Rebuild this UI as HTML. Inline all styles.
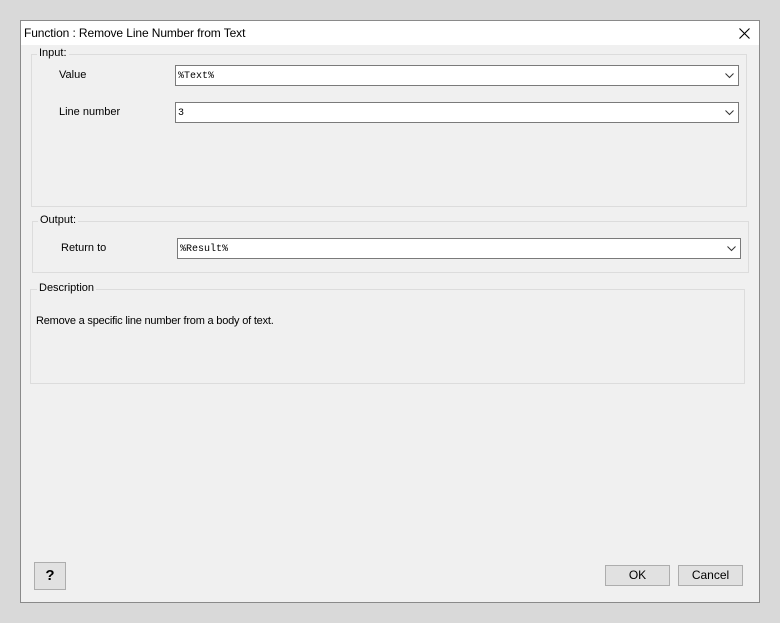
<!DOCTYPE html><html><head><style>
body{margin:0;width:780px;height:623px;background:#d9d9d9;position:relative;font-family:"Liberation Sans",sans-serif;font-size:11px;color:#000;overflow:hidden}
.a{position:absolute}
.win{left:20px;top:20px;width:738px;height:581px;border:1px solid #8a8a8a;background:#f0f0f0}
.tb{left:0;top:0;width:738px;height:24px;background:#fff}
.grp{border:1px solid #dcdcdc}
.lbl{background:#f0f0f0;padding:0 2px}
.cb{background:#fff;border:1px solid #7a7a7a;height:21px;font-family:"Liberation Mono",monospace;font-size:10px;line-height:17px;padding-left:2px;box-sizing:border-box}
.cb svg{position:absolute;right:4px;top:7px}
.btn{background:#e1e1e1;border:1px solid #adadad;box-sizing:border-box;text-align:center}
</style></head><body>
<div class="a win">
<div class="a tb"><span class="a" style="left:3px;top:5px;font-size:12px;letter-spacing:-0.1px">Function : Remove Line Number from Text</span>
<svg class="a" style="left:718px;top:7px" width="11" height="11"><path d="M0.5 0.5L10.5 10.5M10.5 0.5L0.5 10.5" stroke="#000" stroke-width="1.1"/></svg></div>
</div>
<div class="a grp" style="left:31px;top:54px;width:714px;height:151px"></div>
<span class="a lbl" style="left:37px;top:47px">Input:</span>
<span class="a" style="left:59px;top:69px">Value</span>
<div class="a cb" style="left:175px;top:65px;width:564px;padding-top:2px">%Text%<svg width="9" height="6"><path d="M0.5 0.5L4.5 4.5L8.5 0.5" fill="none" stroke="#333"/></svg></div>
<span class="a" style="left:59px;top:106px">Line number</span>
<div class="a cb" style="left:175px;top:102px;width:564px;padding-top:2px">3<svg width="9" height="6"><path d="M0.5 0.5L4.5 4.5L8.5 0.5" fill="none" stroke="#333"/></svg></div>
<div class="a grp" style="left:32px;top:221px;width:715px;height:50px"></div>
<span class="a lbl" style="left:38px;top:214px">Output:</span>
<span class="a" style="left:61px;top:242px">Return to</span>
<div class="a cb" style="left:177px;top:238px;width:564px;padding-top:2px">%Result%<svg width="9" height="6"><path d="M0.5 0.5L4.5 4.5L8.5 0.5" fill="none" stroke="#333"/></svg></div>
<div class="a grp" style="left:30px;top:289px;width:713px;height:93px"></div>
<span class="a lbl" style="left:37px;top:282px">Description</span>
<span class="a" style="left:36px;top:315px;letter-spacing:-0.2px">Remove a specific line number from a body of text.</span>
<div class="a btn" style="left:34px;top:562px;width:32px;height:28px;font-weight:bold;font-size:15px;line-height:26px">?</div>
<div class="a btn" style="left:605px;top:565px;width:65px;height:21px;line-height:19px;font-size:12px">OK</div>
<div class="a btn" style="left:678px;top:565px;width:65px;height:21px;line-height:19px;font-size:12px">Cancel</div>
</body></html>
